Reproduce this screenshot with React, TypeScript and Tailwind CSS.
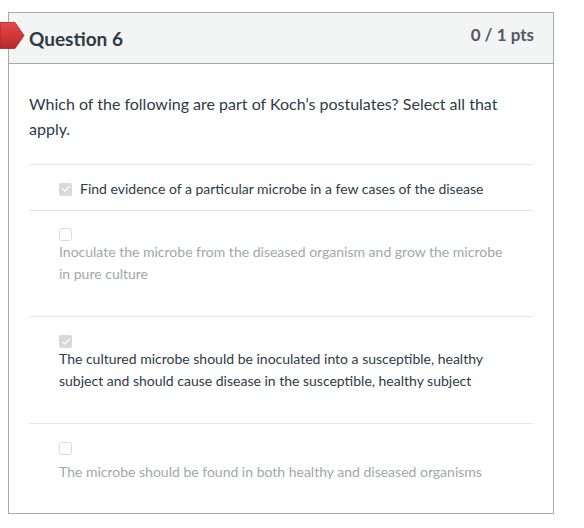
import { Check } from "lucide-react";

type Answer = {
  text: string;
  selected: boolean;
  inline?: boolean;
};

const answers: Answer[] = [
  { text: "Find evidence of a particular microbe in a few cases of the disease", selected: true, inline: true },
  { text: "Inoculate the microbe from the diseased organism and grow the microbe in pure culture", selected: false },
  {
    text: "The cultured microbe should be inoculated into a susceptible, healthy subject and should cause disease in the susceptible, healthy subject",
    selected: true,
  },
  { text: "The microbe should be found in both healthy and diseased organisms", selected: false },
];

function Box({ checked }: { checked: boolean }) {
  if (checked) {
    return (
      <span className="w-[13px] h-[13px] shrink-0 rounded-[2px] bg-[#d9d9d9] flex items-center justify-center">
        <Check className="w-[10px] h-[10px] text-white" strokeWidth={3} />
      </span>
    );
  }
  return <span className="block w-[13px] h-[13px] shrink-0 rounded-[3px] border border-[#dcdcdc] bg-white" />;
}

export default function App() {
  return (
    <div className="w-[584px] h-[528px] bg-white pt-[12px] pl-[8px]" style={{ fontFamily: "Lato, 'Open Sans', sans-serif" }}>
      <div className="relative w-[546px] h-[502px] border border-[#a9a9a9] flex flex-col">
        {/* red marker */}
        <svg className="absolute left-[-9px] top-[9px]" width="25" height="27" viewBox="0 0 25 27">
          <defs>
            <linearGradient id="flag" x1="0" y1="0" x2="0" y2="1">
              <stop offset="0" stopColor="#e8494a" />
              <stop offset="1" stopColor="#b8282a" />
            </linearGradient>
          </defs>
          <polygon points="0,0.5 15,0.5 24,13.5 15,26.5 0,26.5" fill="url(#flag)" stroke="#a92225" strokeWidth="0.8" />
        </svg>

        {/* header */}
        <div className="h-[51px] shrink-0 bg-[#f3f4f4] border-b border-[#a9a9a9] flex items-start justify-between pl-[20px] pr-[19px]">
          <span className="mt-[13px] text-[19px] leading-[26px] font-bold text-[#2d3b45]">Question 6</span>
          <span className="mt-[11px] text-[17px] leading-[22px] font-bold text-[#4f5a63]">0 / 1 pts</span>
        </div>

        {/* body */}
        <div className="px-[20px] pt-[27px]">
          <p className="text-[16px] leading-[25px] text-[#2d3b45] pr-[10px]">
            Which of the following are part of Koch’s postulates? Select all that apply.
          </p>

          <div className="mt-[23px] border-t border-[#e6e6e6]">
            {answers.map((a, i) => {
              const color = a.selected ? "text-[#2d3b45]" : "text-[#a1a7ab]";
              const last = i === answers.length - 1;
              if (a.inline) {
                return (
                  <div key={i} className="pl-[30px] pt-[13px] pb-[10px] border-b border-[#e6e6e6] flex items-center gap-[8px]">
                    <Box checked={a.selected} />
                    <span className={`text-[14px] leading-[22px] ${color}`}>{a.text}</span>
                  </div>
                );
              }
              return (
                <div
                  key={i}
                  className={`pl-[30px] ${i === 1 ? "pt-[17px]" : "pt-[18px]"} ${last ? "pb-[28px]" : "pb-[31px] border-b border-[#e6e6e6]"}`}
                >
                  <Box checked={a.selected} />
                  <p className={`w-[452px] text-[14px] leading-[22px] ${color} ${last ? "mt-[6px]" : ""}`}>{a.text}</p>
                </div>
              );
            })}
          </div>
        </div>
      </div>
    </div>
  );
}
